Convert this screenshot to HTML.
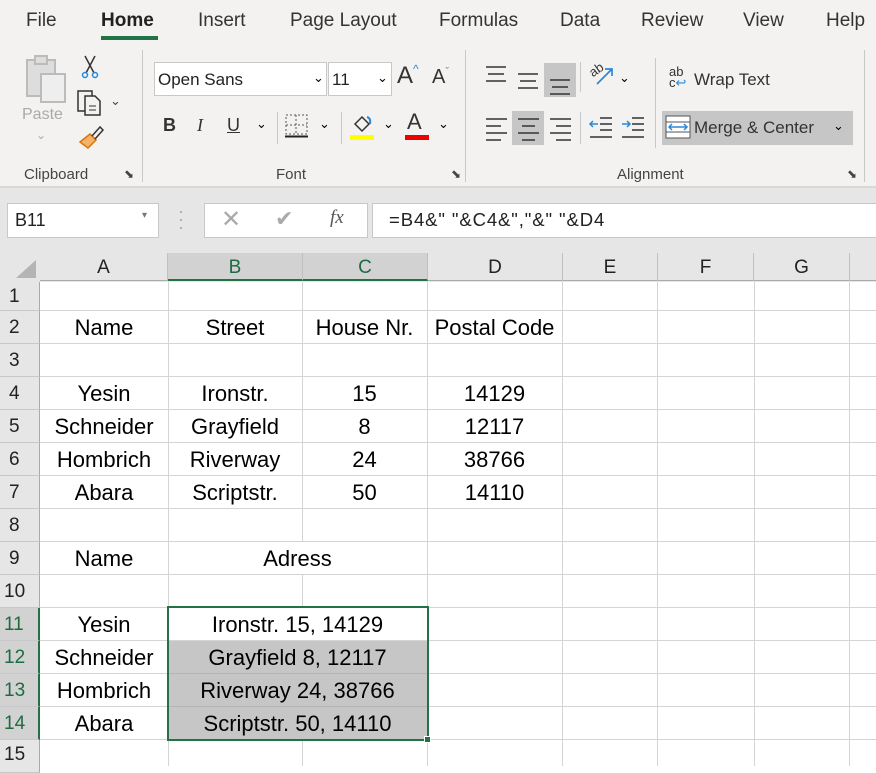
<!DOCTYPE html>
<html><head><meta charset="utf-8"><style>
*{margin:0;padding:0;box-sizing:border-box}
body{width:876px;height:766px;overflow:hidden;background:#fff;font-family:"Liberation Sans",sans-serif;position:relative;color:#000}
.a{position:absolute}
.tab{position:absolute;top:10px;font-size:19px;color:#333}
.rib{position:absolute;left:0;top:0;width:876px;height:188px;background:#f3f2f1}
.fb{position:absolute;left:0;top:188px;width:876px;height:65px;background:#e6e6e6}
.box{position:absolute;background:#fff;border:1px solid #c8c8c8}
.hl{position:absolute;background:#d4d4d4}
.c{position:absolute;text-align:center;font-size:22px;line-height:33px;white-space:nowrap}
.ch{position:absolute;top:253px;height:28px;background:#e6e6e6;text-align:center;font-size:19px;line-height:30px;color:#222;border-right:1px solid #c0c0c0;border-bottom:1px solid #aaa}
.rh{position:absolute;left:0;width:40px;background:#e6e6e6;font-size:19px;color:#222;padding-left:9px;border-bottom:1px solid #c8c8c8;border-right:1px solid #aaa}
.lbl{position:absolute;font-size:15px;color:#444}
.sep{position:absolute;width:1px;background:#c8c8c8}
</style></head><body>
<div class="rib"></div>
<div class="tab" style="left:26px">File</div>
<div class="tab" style="left:101px;color:#222;font-weight:bold">Home</div>
<div class="a" style="left:101px;top:36px;width:57px;height:4px;background:#217346"></div>
<div class="tab" style="left:198px">Insert</div>
<div class="tab" style="left:290px">Page Layout</div>
<div class="tab" style="left:439px">Formulas</div>
<div class="tab" style="left:560px">Data</div>
<div class="tab" style="left:641px">Review</div>
<div class="tab" style="left:743px">View</div>
<div class="tab" style="left:826px">Help</div>
<div class="sep" style="left:142px;top:50px;height:132px"></div>
<div class="sep" style="left:465px;top:50px;height:132px"></div>
<div class="sep" style="left:864px;top:50px;height:132px"></div>
<!-- clipboard -->
<svg class="a" style="left:24px;top:54px" width="46" height="50"><rect x="3" y="6" width="28" height="36" fill="#ddd" stroke="#bbb" stroke-width="2"/><rect x="11" y="2" width="12" height="8" fill="#ddd" stroke="#bbb" stroke-width="2"/><rect x="17" y="20" width="24" height="28" fill="#eee" stroke="#bbb" stroke-width="2"/></svg>
<div class="lbl" style="left:22px;top:106px;color:#aaa;font-size:16px">Paste</div>
<div class="lbl" style="left:36px;top:128px;color:#aaa;font-size:12px">⌄</div>
<svg class="a" style="left:80px;top:55px" width="20" height="25"><path d="M5 1 L14 18 M15 1 L6 18" stroke="#333" stroke-width="1.5"/><circle cx="5" cy="20" r="2.5" fill="none" stroke="#2b88d8" stroke-width="1.5"/><circle cx="15" cy="20" r="2.5" fill="none" stroke="#2b88d8" stroke-width="1.5"/></svg>
<svg class="a" style="left:77px;top:90px" width="28" height="26"><rect x="1" y="1" width="14" height="20" fill="none" stroke="#333" stroke-width="1.5"/><path d="M8 6 H18 L23 11 V25 H8 Z" fill="#f3f2f1" stroke="#333" stroke-width="1.5"/><path d="M12 16 H19 M12 20 H19" stroke="#333"/></svg>
<div class="lbl" style="left:110px;top:93px;font-size:13px">⌄</div>
<svg class="a" style="left:78px;top:124px" width="26" height="26"><path d="M2 18 L12 10 L18 16 L10 24 Z" fill="#f6b26b" stroke="#d87708" stroke-width="1.5"/><path d="M14 12 L22 3 L25 6 L17 15" fill="none" stroke="#333" stroke-width="1.5"/></svg>
<div class="lbl" style="left:24px;top:166px">Clipboard</div>
<div class="lbl" style="left:124px;top:167px;font-size:12px">⬊</div>
<!-- font -->
<div class="box" style="left:154px;top:62px;width:173px;height:34px"></div>
<div class="a" style="left:158px;top:70px;font-size:17px;color:#222">Open Sans</div>
<div class="a" style="left:313px;top:70px;font-size:13px">⌄</div>
<div class="box" style="left:328px;top:62px;width:64px;height:34px"></div>
<div class="a" style="left:332px;top:70px;font-size:17px;color:#222">11</div>
<div class="a" style="left:377px;top:70px;font-size:13px">⌄</div>
<div class="a" style="left:397px;top:62px;font-size:24px;color:#333">A<span style="font-size:12px;color:#2b88d8;vertical-align:top">^</span></div>
<div class="a" style="left:432px;top:66px;font-size:20px;color:#333">A<span style="font-size:11px;color:#2b88d8;vertical-align:top">ˇ</span></div>
<div class="a" style="left:163px;top:115px;font-size:18px;font-weight:bold;color:#333">B</div>
<div class="a" style="left:197px;top:115px;font-size:18px;font-style:italic;font-family:'Liberation Serif',serif;color:#333">I</div>
<div class="a" style="left:227px;top:115px;font-size:18px;text-decoration:underline;color:#333">U</div>
<div class="a" style="left:256px;top:116px;font-size:13px">⌄</div>
<div class="sep" style="left:277px;top:112px;height:32px"></div>
<svg class="a" style="left:285px;top:114px" width="24" height="24"><rect x="1" y="1" width="21" height="19" fill="none" stroke="#555" stroke-dasharray="2 2"/><path d="M11 1 V20 M1 11 H22" stroke="#555" stroke-dasharray="2 2"/><path d="M0 22.5 H23" stroke="#222" stroke-width="2"/></svg>
<div class="a" style="left:319px;top:116px;font-size:13px">⌄</div>
<div class="sep" style="left:341px;top:112px;height:32px"></div>
<svg class="a" style="left:350px;top:112px" width="24" height="28"><path d="M5 12 L12 5 L19 12 L12 19 Z" fill="none" stroke="#333" stroke-width="1.5"/><path d="M17 5 Q21 6 20 12" fill="none" stroke="#2b88d8" stroke-width="2"/><rect x="0" y="23" width="24" height="5" fill="#ffff00"/></svg>
<div class="a" style="left:383px;top:116px;font-size:13px">⌄</div>
<div class="a" style="left:407px;top:109px;font-size:22px;color:#333">A</div>
<div class="a" style="left:405px;top:135px;width:24px;height:5px;background:#e00"></div>
<div class="a" style="left:438px;top:116px;font-size:13px">⌄</div>
<div class="lbl" style="left:276px;top:166px">Font</div>
<div class="lbl" style="left:451px;top:167px;font-size:12px">⬊</div>
<!-- alignment -->
<div class="a" style="left:544px;top:63px;width:32px;height:34px;background:#c6c6c6"></div>
<div class="a" style="left:512px;top:111px;width:32px;height:34px;background:#c6c6c6"></div>
<svg class="a" style="left:480px;top:60px" width="180" height="90">
<g stroke="#333" stroke-width="1.5" fill="none">
<path d="M6 7H26M8 14H24M6 21H26"/>
<path d="M38 14H58M40 21H56M38 28H58"/>
<path d="M70 20H90M72 27H88M70 34H90"/>
<path d="M6 59H27M6 66H21M6 73H27M6 80H21"/>
<path d="M38 59H59M42 66H55M38 73H59M42 80H55"/>
<path d="M70 59H91M76 66H91M70 73H91M76 80H91"/>
<path d="M120 58H132M120 64H132M120 70H132M110 77H132"/>
<path d="M152 58H164M152 64H164M152 70H164M142 77H164"/>
</g>
<path d="M110 64H118M113 61L110 64L113 67M142 64H150M147 61L150 64L147 67" stroke="#2b88d8" stroke-width="1.5" fill="none"/>
</svg>
<div class="sep" style="left:580px;top:62px;height:30px"></div>
<div class="sep" style="left:580px;top:112px;height:32px"></div>
<div class="a" style="left:589px;top:62px;font-size:13px;color:#333;transform:rotate(-35deg)">ab</div>
<svg class="a" style="left:594px;top:64px" width="22" height="24"><path d="M3 20 L18 5 M11 5 H18 V12" fill="none" stroke="#2b88d8" stroke-width="1.7"/></svg>
<div class="a" style="left:619px;top:70px;font-size:13px">⌄</div>
<div class="sep" style="left:655px;top:58px;height:90px"></div>
<div class="a" style="left:669px;top:66px;font-size:13px;line-height:11px;color:#333">ab<br>c<span style="color:#2b88d8">↩</span></div>
<div class="a" style="left:694px;top:70px;font-size:17px;color:#333">Wrap Text</div>
<div class="a" style="left:662px;top:111px;width:191px;height:34px;background:#c6c6c6"></div>
<svg class="a" style="left:665px;top:115px" width="26" height="25"><rect x="1" y="1" width="24" height="22" fill="#fff" stroke="#555"/><path d="M1 7H25M1 17H25" stroke="#555"/><path d="M4 12H22M7 9L4 12L7 15M19 9L22 12L19 15" stroke="#2b88d8" stroke-width="1.5" fill="none"/></svg>
<div class="a" style="left:694px;top:118px;font-size:17px;color:#333">Merge &amp; Center</div>
<div class="a" style="left:833px;top:118px;font-size:13px">⌄</div>
<div class="lbl" style="left:617px;top:166px">Alignment</div>
<div class="lbl" style="left:847px;top:167px;font-size:12px">⬊</div>
<div class="a" style="left:0;top:186px;width:876px;height:3px;background:#d8d8d8"></div>
<!-- formula bar -->
<div class="fb"></div>
<div class="box" style="left:7px;top:203px;width:152px;height:35px"></div>
<div class="a" style="left:15px;top:210px;font-size:18px;color:#222">B11</div>
<div class="a" style="left:142px;top:210px;font-size:10px;color:#777">▾</div>
<div class="a" style="left:178px;top:207px;font-size:18px;color:#aaa;line-height:8px">·<br>·<br>·</div>
<div class="box" style="left:204px;top:203px;width:164px;height:35px"></div>
<div class="a" style="left:221px;top:205px;font-size:24px;color:#aaa">✕</div>
<div class="a" style="left:275px;top:206px;font-size:22px;color:#aaa">✔</div>
<div class="a" style="left:330px;top:207px;font-size:19px;color:#555;font-style:italic;font-family:'Liberation Serif',serif">fx</div>
<div class="box" style="left:372px;top:203px;width:510px;height:35px"></div>
<div class="a" style="left:389px;top:209px;font-size:18.5px;letter-spacing:0.9px;color:#222">=B4&amp;" "&amp;C4&amp;","&amp;" "&amp;D4</div>
<!-- column headers -->
<div class="a" style="left:0;top:253px;width:876px;height:29px;background:#e6e6e6"></div>
<svg class="a" style="left:14px;top:258px" width="24" height="22"><path d="M22 2 V20 H2 Z" fill="#b4b4b4"/></svg>
<div class="ch" style="left:40px;width:128px">A</div>
<div class="ch" style="left:168px;width:135px;background:#d2d2d2;color:#1e6b41;border-bottom:2px solid #217346">B</div>
<div class="ch" style="left:303px;width:125px;background:#d2d2d2;color:#1e6b41;border-bottom:2px solid #217346">C</div>
<div class="ch" style="left:428px;width:135px">D</div>
<div class="ch" style="left:563px;width:95px">E</div>
<div class="ch" style="left:658px;width:96px">F</div>
<div class="ch" style="left:754px;width:96px">G</div>
<div class="ch" style="left:850px;width:40px"></div>
<!-- grid lines -->
<div class="hl" style="left:168px;top:282px;width:1px;height:484px"></div>
<div class="hl" style="left:302px;top:282px;width:1px;height:260px"></div>
<div class="hl" style="left:302px;top:574px;width:1px;height:33px"></div>
<div class="hl" style="left:302px;top:740px;width:1px;height:26px"></div>
<div class="hl" style="left:427px;top:282px;width:1px;height:484px"></div>
<div class="hl" style="left:562px;top:282px;width:1px;height:484px"></div>
<div class="hl" style="left:657px;top:282px;width:1px;height:484px"></div>
<div class="hl" style="left:754px;top:282px;width:1px;height:484px"></div>
<div class="hl" style="left:849px;top:282px;width:1px;height:484px"></div>
<div class="hl" style="left:40px;top:310px;width:836px;height:1px"></div>
<div class="hl" style="left:40px;top:343px;width:836px;height:1px"></div>
<div class="hl" style="left:40px;top:376px;width:836px;height:1px"></div>
<div class="hl" style="left:40px;top:409px;width:836px;height:1px"></div>
<div class="hl" style="left:40px;top:442px;width:836px;height:1px"></div>
<div class="hl" style="left:40px;top:475px;width:836px;height:1px"></div>
<div class="hl" style="left:40px;top:508px;width:836px;height:1px"></div>
<div class="hl" style="left:40px;top:541px;width:836px;height:1px"></div>
<div class="hl" style="left:40px;top:574px;width:836px;height:1px"></div>
<div class="hl" style="left:40px;top:607px;width:836px;height:1px"></div>
<div class="hl" style="left:40px;top:640px;width:836px;height:1px"></div>
<div class="hl" style="left:40px;top:673px;width:836px;height:1px"></div>
<div class="hl" style="left:40px;top:706px;width:836px;height:1px"></div>
<div class="hl" style="left:40px;top:739px;width:836px;height:1px"></div>
<!-- row headers -->
<div class="rh" style="top:282px;height:29px;line-height:30px">1</div>
<div class="rh" style="top:311px;height:33px;line-height:33px">2</div>
<div class="rh" style="top:344px;height:33px;line-height:33px">3</div>
<div class="rh" style="top:377px;height:33px;line-height:33px">4</div>
<div class="rh" style="top:410px;height:33px;line-height:33px">5</div>
<div class="rh" style="top:443px;height:33px;line-height:33px">6</div>
<div class="rh" style="top:476px;height:33px;line-height:33px">7</div>
<div class="rh" style="top:509px;height:33px;line-height:33px">8</div>
<div class="rh" style="top:542px;height:33px;line-height:33px">9</div>
<div class="rh" style="top:575px;height:33px;line-height:33px;padding-left:4px">10</div>
<div class="rh" style="top:608px;height:33px;line-height:33px;padding-left:4px;background:#d2d2d2;color:#1e6b41;border-right:2px solid #217346">11</div>
<div class="rh" style="top:641px;height:33px;line-height:33px;padding-left:4px;background:#d2d2d2;color:#1e6b41;border-right:2px solid #217346">12</div>
<div class="rh" style="top:674px;height:33px;line-height:33px;padding-left:4px;background:#d2d2d2;color:#1e6b41;border-right:2px solid #217346">13</div>
<div class="rh" style="top:707px;height:33px;line-height:33px;padding-left:4px;background:#d2d2d2;color:#1e6b41;border-right:2px solid #217346">14</div>
<div class="rh" style="top:740px;height:33px;line-height:30px;padding-left:4px">15</div>
<!-- selection fill -->
<div class="a" style="left:169px;top:641px;width:258px;height:98px;background:#c6c6c6"></div>
<div class="a" style="left:169px;top:673px;width:258px;height:1px;background:#b4b4b4"></div>
<div class="a" style="left:169px;top:706px;width:258px;height:1px;background:#b4b4b4"></div>
<div class="a" style="left:167px;top:606px;width:262px;height:135px;border:2px solid #217346"></div>
<div class="a" style="left:424px;top:736px;width:7px;height:7px;background:#217346;border:1px solid #fff"></div>
<!-- cells -->
<div class="c" style="left:40px;top:311px;width:128px">Name</div>
<div class="c" style="left:168px;top:311px;width:134px">Street</div>
<div class="c" style="left:302px;top:311px;width:125px">House Nr.</div>
<div class="c" style="left:427px;top:311px;width:135px">Postal Code</div>
<div class="c" style="left:40px;top:377px;width:128px">Yesin</div>
<div class="c" style="left:168px;top:377px;width:134px">Ironstr.</div>
<div class="c" style="left:302px;top:377px;width:125px">15</div>
<div class="c" style="left:427px;top:377px;width:135px">14129</div>
<div class="c" style="left:40px;top:410px;width:128px">Schneider</div>
<div class="c" style="left:168px;top:410px;width:134px">Grayfield</div>
<div class="c" style="left:302px;top:410px;width:125px">8</div>
<div class="c" style="left:427px;top:410px;width:135px">12117</div>
<div class="c" style="left:40px;top:443px;width:128px">Hombrich</div>
<div class="c" style="left:168px;top:443px;width:134px">Riverway</div>
<div class="c" style="left:302px;top:443px;width:125px">24</div>
<div class="c" style="left:427px;top:443px;width:135px">38766</div>
<div class="c" style="left:40px;top:476px;width:128px">Abara</div>
<div class="c" style="left:168px;top:476px;width:134px">Scriptstr.</div>
<div class="c" style="left:302px;top:476px;width:125px">50</div>
<div class="c" style="left:427px;top:476px;width:135px">14110</div>
<div class="c" style="left:40px;top:542px;width:128px">Name</div>
<div class="c" style="left:168px;top:542px;width:259px">Adress</div>
<div class="c" style="left:40px;top:608px;width:128px">Yesin</div>
<div class="c" style="left:168px;top:608px;width:259px">Ironstr. 15, 14129</div>
<div class="c" style="left:40px;top:641px;width:128px">Schneider</div>
<div class="c" style="left:168px;top:641px;width:259px">Grayfield 8, 12117</div>
<div class="c" style="left:40px;top:674px;width:128px">Hombrich</div>
<div class="c" style="left:168px;top:674px;width:259px">Riverway 24, 38766</div>
<div class="c" style="left:40px;top:707px;width:128px">Abara</div>
<div class="c" style="left:168px;top:707px;width:259px">Scriptstr. 50, 14110</div>
</body></html>
